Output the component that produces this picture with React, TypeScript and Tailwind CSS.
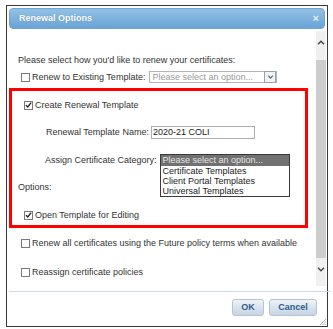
import React from "react";

// small square checkbox drawn like the old IE control
function Checkbox({ checked }: { checked?: boolean }) {
  return (
    <span className="inline-flex h-[9px] w-[9px] shrink-0 items-center justify-center border border-[#7a7a7a] bg-white">
      {checked && (
        <svg viewBox="0 0 10 10" className="h-[8px] w-[8px]">
          <path d="M1.3 5.2 L3.9 7.9 L8.8 1.6" fill="none" stroke="#1f1f1f" strokeWidth="1.9" />
        </svg>
      )}
    </span>
  );
}

function CheckRow({ label, checked, className }: { label: string; checked?: boolean; className: string }) {
  return (
    <div className={`flex items-center gap-[2px] pl-[12px] ${className}`}>
      <Checkbox checked={checked} />
      <span>{label}</span>
    </div>
  );
}

function Chevron({ up }: { up?: boolean }) {
  return (
    <svg viewBox="0 0 8 5" className="h-[5px] w-[8px]">
      <path
        d={up ? "M1 4.2 L4 1.2 L7 4.2" : "M1 0.8 L4 3.8 L7 0.8"}
        fill="none"
        stroke="#4a4a4a"
        strokeWidth="1.5"
      />
    </svg>
  );
}

const options = ["Certificate Templates", "Client Portal Templates", "Universal Templates"];

export default function App() {
  return (
    <div
      className="h-[329px] w-[333px] bg-white pl-[6px] pt-[5px] text-[9px] leading-[11px] text-[#333]"
      style={{ fontFamily: '"Liberation Sans", Arial, sans-serif' }}
    >
      <div className="relative flex h-[322px] w-[322px] flex-col border border-[#3a3a3a] bg-white p-[2px]">
        {/* title bar */}
        <div className="flex h-[21px] shrink-0 items-center justify-between rounded-[4px] border border-[#70a4d3] bg-linear-to-b from-[#92c1e6] to-[#6aa3d4] pl-[9px] pr-[5px]">
          <span className="font-bold text-white [text-shadow:0_0_1px_rgba(40,80,120,0.4)]">Renewal Options</span>
          <span className="text-[11px] font-bold leading-none text-[#e6eef6]">×</span>
        </div>

        {/* body + scrollbar */}
        <div className="flex flex-1">
          <div className="flex-1 pt-[25px]">
            <div className="h-[12px] pl-[9px] leading-[12px]">
              Please select how you'd like to renew your certificates:
            </div>

            <div className="flex h-[22px] items-center gap-[2px] pl-[12px]">
              <Checkbox />
              <span>Renew to Existing Template:</span>
              <div className="ml-[2px] flex h-[12px] w-[128px] items-center border border-[#b4b4b4] bg-white">
                <span className="flex-1 pl-[2px] text-[#9a9a9a]">Please select an option...</span>
                <span className="flex h-[12px] w-[12px] items-center justify-center border border-[#9aa3ab] bg-[#f3f3f3]">
                  <svg viewBox="0 0 8 5" className="h-[4px] w-[7px]">
                    <path d="M1 0.8 L4 3.8 L7 0.8" fill="none" stroke="#4d6f90" strokeWidth="1.5" />
                  </svg>
                </span>
              </div>
            </div>

            {/* highlighted section */}
            <div className="mr-[8px] h-[140px] border-[3px] border-[#ff0000]">
              <CheckRow label="Create Renewal Template" checked className="h-[28px] pl-[9px]" />

              <div className="flex h-[26px] items-center gap-[2px] pl-[34px]">
                <span>Renewal Template Name:</span>
                <div className="flex h-[13px] w-[104px] items-center border border-[#abadb3] bg-white pl-[1px] text-[#222]">
                  2020-21 COLI
                </div>
              </div>

              <div className="flex h-[32px] items-start gap-[3px] pl-[33px] pt-[9px]">
                <span className="pt-[1px]">Assign Certificate Category:</span>
                <div className="relative h-[11px] w-[130px]">
                  <div className="absolute left-0 top-0 z-10 w-[130px] border border-[#3a3a3a] bg-white text-[#222]">
                    <div className="h-[11px] bg-[#717171] pl-[2px] text-[#e4e4e4]">Please select an option...</div>
                    {options.map((o) => (
                      <div key={o} className="h-[10px] pl-[2px] leading-[10px]">
                        {o}
                      </div>
                    ))}
                  </div>
                </div>
              </div>

              <div className="flex h-[20px] items-center pl-[6px]">Options:</div>

              <CheckRow label="Open Template for Editing" checked className="mt-[9px] h-[18px] pl-[9px]" />
            </div>

            <CheckRow label="Renew all certificates using the Future policy terms when available" className="h-[30px]" />
            <CheckRow label="Reassign certificate policies" className="h-[28px]" />
          </div>

          {/* scrollbar */}
          <div className="mb-[5px] mr-[-1px] mt-[2px] flex w-[10px] flex-col bg-[#f0f0f0]">
            <div className="flex h-[22px] items-center justify-center">
              <Chevron up />
            </div>
            <div className="h-[7px]" />
            <div className="h-[198px] bg-[#cdcdcd]" />
            <div className="flex h-[22px] items-center justify-center">
              <Chevron />
            </div>
          </div>
        </div>

        {/* footer */}
        <div className="mr-[-6px] h-px bg-[#c9dbec]" />
        <div className="flex h-[32px] shrink-0 justify-end gap-[5px] pr-[8px] pt-[7px]">
          <button className="h-[17px] w-[32px] rounded-[3px] border border-[#b3c4d5] bg-linear-to-b from-[#eef3f8] to-[#c6d4e2] font-bold text-[#2d5d8c]">
            OK
          </button>
          <button className="h-[17px] w-[48px] rounded-[3px] border border-[#b3c4d5] bg-linear-to-b from-[#eef3f8] to-[#c6d4e2] font-bold text-[#2d5d8c]">
            Cancel
          </button>
        </div>

        {/* resize grip */}
        <svg viewBox="0 0 6 6" className="absolute bottom-[1px] right-[1px] h-[6px] w-[6px]">
          <path d="M6 0 L0 6 M6 2.5 L2.5 6 M6 5 L5 6" stroke="#9a9a9a" strokeWidth="0.8" />
        </svg>
      </div>
    </div>
  );
}
